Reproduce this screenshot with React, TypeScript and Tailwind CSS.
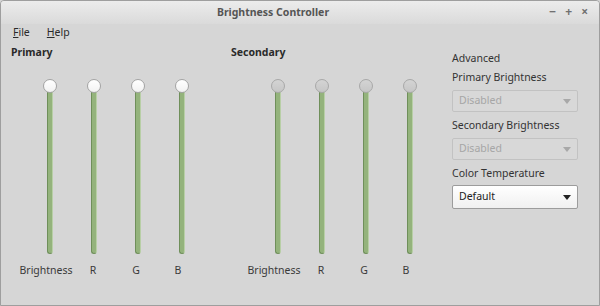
import type { ReactNode } from "react";

const font = { fontFamily: '"Noto Sans", "Open Sans", sans-serif' };

const labels = [
  { text: "Brightness", shift: "-translate-x-[4px]" },
  { text: "R", shift: "-translate-x-[1px]" },
  { text: "G", shift: "-translate-x-[2px]" },
  { text: "B", shift: "-translate-x-[4px]" },
];

function Slider({ enabled, label, shift }: { enabled: boolean; label: string; shift: string }) {
  return (
    <div className="w-[44px] flex flex-col items-center">
      <div className="relative h-[175px] w-[14px] flex justify-center pt-[1px]">
        <div className="w-[6px] h-full rounded-b-[3px] bg-[#94b37c] border border-[#6f8f5a] border-r-[#b8cfa6]" />
        <div
          className={`absolute top-0 left-0 w-[14px] h-[14px] rounded-full border ${
            enabled
              ? "bg-gradient-to-b from-white to-[#f2f2f2] border-[#a4a4a4]"
              : "bg-gradient-to-b from-[#d4d4d4] to-[#c6c6c6] border-[#a8a8a8]"
          }`}
        />
      </div>
      <div className={`mt-[9px] leading-[14px] text-[10.5px] text-[#3a3a3a] whitespace-nowrap ${shift}`}>
        {label}
      </div>
    </div>
  );
}

function Group({ title, enabled, indent }: { title: string; enabled: boolean; indent: string }) {
  return (
    <div className="flex flex-col">
      <div className="text-[10.5px] font-bold text-[#2a2a2a] h-[16px] leading-[16px]">{title}</div>
      <div className={`flex mt-[19px] ${indent}`}>
        {labels.map((l) => (
          <Slider key={l.text} enabled={enabled} label={l.text} shift={l.shift} />
        ))}
      </div>
    </div>
  );
}

function Combo({ value, disabled }: { value: string; disabled?: boolean }) {
  return (
    <div
      className={`w-[126px] flex items-center justify-between px-[6px] rounded-[2px] border text-[10.5px] ${
        disabled
          ? "h-[22px] border-[#c2c2c2] bg-[#d8d8d8] text-[#a6a6a6]"
          : "h-[24px] border-[#9c9c9c] bg-gradient-to-b from-white to-[#f0f0f0] text-[#222]"
      }`}
    >
      <span>{value}</span>
      <svg width="8" height="5" viewBox="0 0 8 5">
        <path d="M0 0h8L4 5z" fill={disabled ? "#a8a8a8" : "#222"} />
      </svg>
    </div>
  );
}

function Label({ children, className }: { children: ReactNode; className: string }) {
  return <div className={`h-[14px] leading-[14px] ${className}`}>{children}</div>;
}

export default function App() {
  return (
    <div className="w-[600px] h-[306px] bg-[#d6d6d6]" style={font}>
      <div className="w-full h-full border border-[#9e9e9e] rounded-t-[4px] flex flex-col overflow-hidden">
        {/* Title bar */}
        <div className="h-[23px] shrink-0 relative flex items-center justify-center pr-[54px] bg-gradient-to-b from-[#ececec] to-[#dadada]">
          <span className="text-[10.5px] font-bold text-[#555]">Brightness Controller</span>
          <div className="absolute right-[11px] top-[4px] flex gap-[9px] text-[12px] font-bold text-[#707070] leading-[14px]">
            <span>−</span>
            <span>+</span>
            <span>×</span>
          </div>
        </div>

        {/* Menu */}
        <div className="flex gap-[17px] px-[12px] h-[18px] items-center text-[10.5px] text-[#2a2a2a]">
          <span><u>F</u>ile</span>
          <span><u>H</u>elp</span>
        </div>

        {/* Content */}
        <div className="flex pl-[10px] pt-[2px]">
          <div className="w-[220px]">
            <Group title="Primary" enabled indent="ml-[17px]" />
          </div>
          <div className="w-[221px]">
            <Group title="Secondary" enabled={false} indent="ml-[25px]" />
          </div>
          <div className="flex flex-col text-[10.5px] text-[#333] pt-[7px]">
            <Label className="">Advanced</Label>
            <Label className="mt-[5px]">Primary Brightness</Label>
            <div className="mt-[6px]"><Combo value="Disabled" disabled /></div>
            <Label className="mt-[6px]">Secondary Brightness</Label>
            <div className="mt-[6px]"><Combo value="Disabled" disabled /></div>
            <Label className="mt-[6px]">Color Temperature</Label>
            <div className="mt-[5px]"><Combo value="Default" /></div>
          </div>
        </div>
      </div>
    </div>
  );
}
